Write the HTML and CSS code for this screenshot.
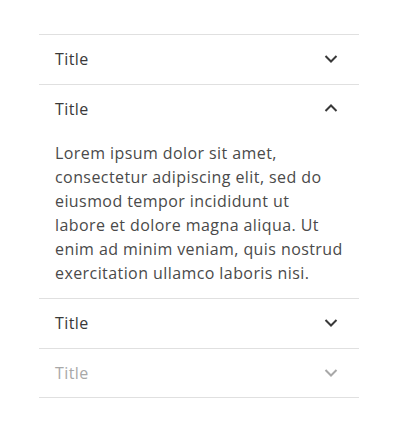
FILE: index.html
```html
<!DOCTYPE html>
<html lang="en">
<head>
<meta charset="utf-8">
<title>Accordion</title>
<link rel="stylesheet" href="styles.css">
</head>
<body>
<div class="accordion">
  <div class="item">
    <div class="header">
      <span class="title">Title</span>
      <svg class="chev" width="24" height="24" viewBox="0 0 24 24"><path d="M6.5 9 L12 14.5 L17.5 9" fill="none" stroke="currentColor" stroke-width="2"/></svg>
    </div>
  </div>
  <div class="item open">
    <div class="header">
      <span class="title">Title</span>
      <svg class="chev" width="24" height="24" viewBox="0 0 24 24"><path d="M6.5 14 L12 8.5 L17.5 14" fill="none" stroke="currentColor" stroke-width="2"/></svg>
    </div>
    <div class="panel">Lorem ipsum dolor sit amet,<br>consectetur adipiscing elit, sed do<br>eiusmod tempor incididunt ut<br>labore et dolore magna aliqua. Ut<br>enim ad minim veniam, quis nostrud<br>exercitation ullamco laboris nisi.</div>
  </div>
  <div class="item">
    <div class="header">
      <span class="title">Title</span>
      <svg class="chev" width="24" height="24" viewBox="0 0 24 24"><path d="M6.5 9 L12 14.5 L17.5 9" fill="none" stroke="currentColor" stroke-width="2"/></svg>
    </div>
  </div>
  <div class="item disabled">
    <div class="header">
      <span class="title">Title</span>
      <svg class="chev" width="24" height="24" viewBox="0 0 24 24"><path d="M6.5 9 L12 14.5 L17.5 9" fill="none" stroke="currentColor" stroke-width="2"/></svg>
    </div>
  </div>
</div>
</body>
</html>
```
FILE: styles.css
```css
html, body {
  margin: 0;
  padding: 0;
  background: #ffffff;
}
body {
  font-family: "Open Sans", "Noto Sans", sans-serif;
  color: #393939;
}
.accordion {
  width: 320px;
  margin: 34px 0 0 39px;
  border-top: 1px solid #e0e0e0;
}
.item {
  border-bottom: 1px solid #e0e0e0;
}
.header {
  height: 49px;
  display: flex;
  align-items: center;
  justify-content: space-between;
  padding: 0 16px 2px;
  box-sizing: border-box;
}
.disabled .header {
  height: 48px;
  padding-bottom: 0;
}
.title {
  font-size: 16px;
  font-weight: 500;
  letter-spacing: 0.4px;
  color: #393939;
}
.chev {
  display: block;
  color: #393939;
}
.panel {
  padding: 7px 16px 13px;
  font-size: 16px;
  line-height: 24px;
  letter-spacing: 0.42px;
  white-space: nowrap;
  color: #4a4a4a;
}
.disabled .title,
.disabled .chev {
  color: #a8a8a8;
}
```
